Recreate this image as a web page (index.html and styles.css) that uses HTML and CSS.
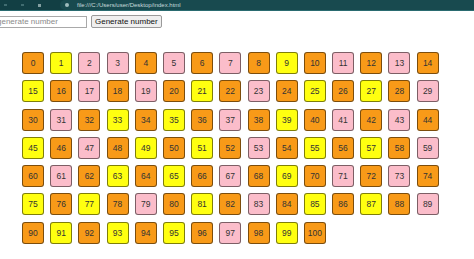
FILE: index.html
```html
<!DOCTYPE html>
<html>
<head>
<meta charset="utf-8">
<link rel="stylesheet" href="styles.css">
</head>
<body>
<div class="chrome">
  <div class="nav">
    <span class="navdot"></span><span class="navdot"></span><span class="navdot sq"></span>
  </div>
  <div class="url"><span class="urlicon"></span><span class="urltext">file:///C:/Users/user/Desktop/index.html</span></div>
</div>
<div class="controls">
  <input class="numinput" type="text" placeholder="generate number">
  <button class="genbtn">Generate number</button>
</div>
<div class="grid" id="grid"></div>
<script src="app.js"></script>
</body>
</html>
```
FILE: app.js
```js
(function(){
  var g = document.getElementById('grid');
  function isPrime(n){
    if(n<2) return false;
    for(var i=2;i*i<=n;i++){ if(n%i===0) return false; }
    return true;
  }
  for(var n=0;n<=100;n++){
    var d = document.createElement('div');
    var cls = isPrime(n) ? 'prime' : (n%2===0 ? 'even' : 'odd');
    d.className = 'cell ' + cls;
    d.textContent = n;
    g.appendChild(d);
  }
})();
```
FILE: styles.css
```css
html, body {
  margin: 0;
  padding: 0;
  background: #fff;
  font-family: "Liberation Sans", Arial, sans-serif;
  overflow: hidden;
}
.chrome {
  height: 10px;
  background: #123f44;
  border-bottom: 1px solid #2a6b70;
  display: flex;
  align-items: center;
  overflow: hidden;
}
.nav {
  display: flex;
  gap: 14px;
  padding-left: 4px;
  width: 56px;
}
.navdot {
  width: 3px;
  height: 2px;
  background: #5f8a8d;
  opacity: 0.6;
}
.navdot.sq {
  width: 3px;
  height: 3px;
  background: #cfe0e0;
}
.url {
  flex: 1;
  height: 10px;
  background: #184a4f;
  border-radius: 6px 0 0 6px;
  display: flex;
  align-items: center;
  padding-left: 5px;
  gap: 8px;
}
.urlicon {
  width: 4px;
  height: 4px;
  border-radius: 50%;
  background: #9fbcbd;
}
.urltext {
  font-size: 6px;
  color: #c9dcdc;
  white-space: nowrap;
  line-height: 1;
}
.controls {
  display: flex;
  align-items: center;
  gap: 4px;
  margin-top: 4px;
  margin-left: -6px;
}
.numinput {
  width: 93px;
  height: 12px;
  box-sizing: border-box;
  border: 1px solid #a9a9a9;
  font-family: "Liberation Sans", Arial, sans-serif;
  font-size: 8px;
  padding: 0 2px;
  margin: 0;
}
.numinput::placeholder {
  color: #8a8a8a;
}
.genbtn {
  height: 13px;
  box-sizing: border-box;
  font-family: "Liberation Sans", Arial, sans-serif;
  font-size: 8px;
  padding: 0 3px;
  margin: 0;
  border: 1px solid #9a9a9a;
  border-radius: 2px;
  background: #efefef;
  color: #111;
}
.grid {
  display: grid;
  grid-template-columns: repeat(15, 22px);
  grid-auto-rows: 22px;
  column-gap: 6.2px;
  row-gap: 6.3px;
  margin-top: 24px;
  padding-left: 22px;
}
.cell {
  box-sizing: border-box;
  border: 1px solid rgba(0, 0, 0, 0.5);
  border-radius: 3px;
  display: flex;
  align-items: center;
  justify-content: center;
  font-size: 8.5px;
  color: #333;
}
.even { background: #f89a18; }
.odd { background: #ffff10; }
.prime { background: #fbbdca; }
```
